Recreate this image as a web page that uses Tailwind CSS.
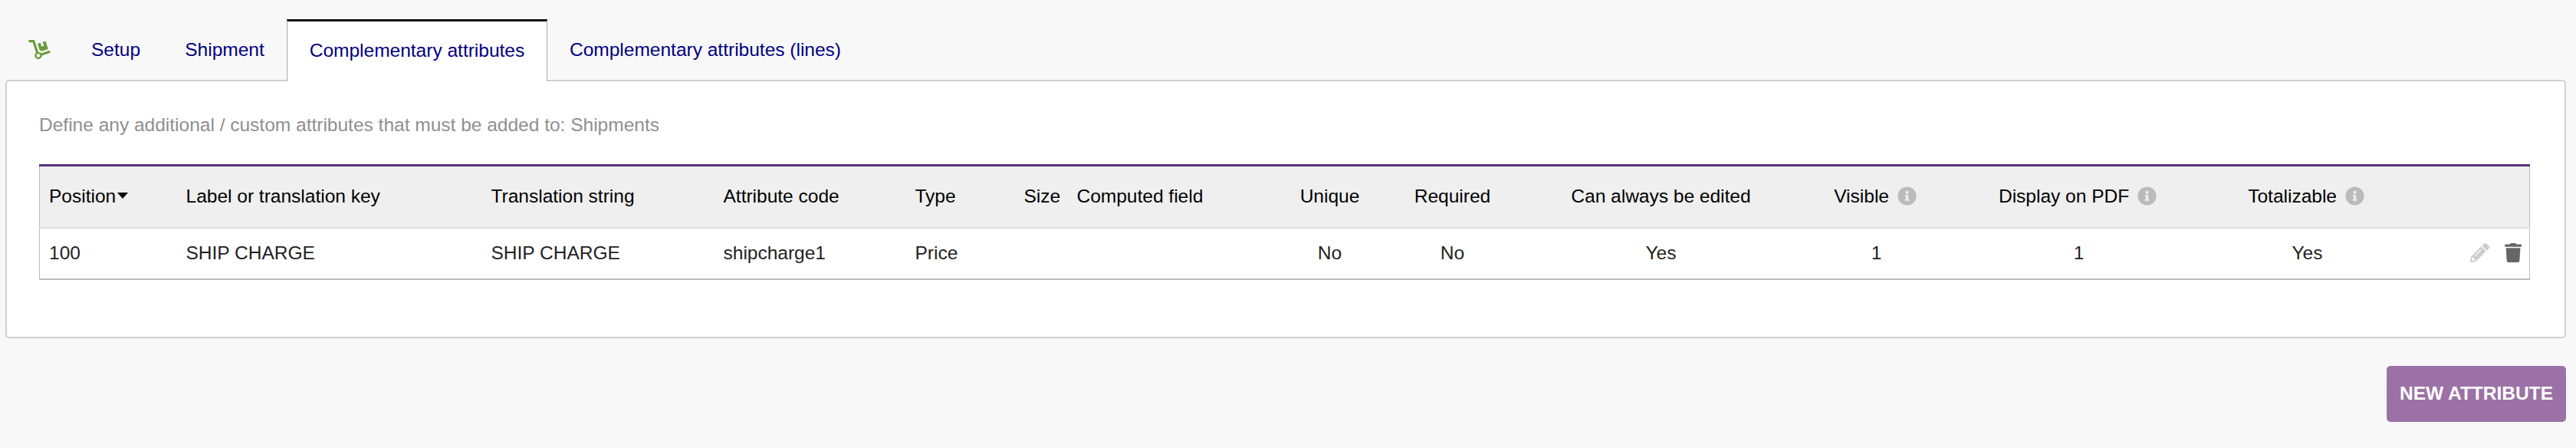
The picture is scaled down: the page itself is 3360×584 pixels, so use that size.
<!DOCTYPE html>
<html lang="en">
<head>
  <meta charset="UTF-8" />
  <title>Complementary attributes</title>
  <script src="https://cdn.jsdelivr.net/npm/@tailwindcss/browser@4"></script>
</head>
<body class="bg-[#f8f8f8] font-['Liberation_Sans',Arial,sans-serif] text-[24.5px] text-[#222] h-[584px] overflow-hidden">
  <div class="pl-[7px] pr-[13px] pt-[24px]">
    <!-- tabs -->
    <div class="flex h-[80px] text-[#000080]">
      <a class="w-[83px] flex items-center justify-center pl-[6px] pt-[1px]">
        <svg class="w-[29px] h-[25px] text-[#6a9b3a]" viewBox="0 0 576 512" fill="currentColor"><path d="M294.2 277.7c18 5 34.7 13.4 49.5 24.7l161.5-53.8c8.4-2.8 12.9-11.9 10.1-20.2L454.9 47.2c-2.8-8.4-11.9-12.9-20.2-10.1l-61.1 20.4 33.1 99.4L346 177l-33.1-99.4-61.6 20.5c-8.4 2.8-12.9 11.9-10.1 20.2l53 159.4zm281 48.7L565 296c-2.8-8.4-11.9-12.9-20.2-10.1l-213.5 71.2c-17.2-22-43.6-36.4-73.5-37L158.4 21.9C154 8.8 141.8 0 128 0H16C7.2 0 0 7.2 0 16v32c0 8.8 7.2 16 16 16h88.9l92.2 276.7c-26.1 20.4-41.7 53.6-36 90.5 6.1 39.4 37.9 72.3 77.3 79.2 60.2 10.7 112.3-34.8 113.4-92.6l213.3-71.2c8.3-2.8 12.9-11.8 10.1-20.2zM256 464c-26.5 0-48-21.5-48-48s21.5-48 48-48 48 21.5 48 48-21.5 48-48 48z"/></svg>
      </a>
      <a class="w-[122px] flex items-center justify-center pt-[2px]">Setup</a>
      <a class="w-[162px] flex items-center justify-center pt-[2px]">Shipment</a>
      <a class="w-[340px] flex items-center justify-center pb-[2px] bg-white border-t-[3px] border-x border-t-[#111] border-x-[#aaa] relative top-px h-[81px]">Complementary attributes</a>
      <a class="flex items-center pl-[29px] pt-[2px]">Complementary attributes (lines)</a>
    </div>

    <!-- card -->
    <div class="bg-white border-2 border-[#d0d0d0] rounded-[5px] h-[337px] pl-[42px] pr-[47px]">
      <p class="text-[#8f8f8f] pt-[43px] h-[108px] leading-[28px]">Define any additional / custom attributes that must be added to: Shipments</p>
      <table class="w-[3248px] table-fixed border-collapse border-x border-b-2 border-[#bbb] rounded-b">
        <colgroup>
          <col class="w-[179px]" /><col class="w-[398px]" /><col class="w-[303px]" /><col class="w-[250px]" /><col class="w-[142px]" /><col class="w-[69px]" /><col class="w-[243px]" /><col class="w-[198px]" /><col class="w-[122px]" /><col class="w-[422px]" /><col class="w-[140px]" /><col class="w-[388px]" /><col class="w-[208px]" /><col class="w-[186px]" />
        </colgroup>
        <thead>
          <tr class="h-[81px] bg-[#efefef] border-t-[3px] border-t-[#5a3278] border-b-2 border-b-[#dedede] text-black font-normal">
            <th class="font-normal text-left pl-[12px] whitespace-nowrap">Position<svg class="inline w-[14px] h-[8px] ml-[2px] align-[5px]" viewBox="0 0 14 8" fill="currentColor"><polygon points="0,0 14,0 7,8" /></svg></th>
            <th class="font-normal text-left pl-[12px]">Label or translation key</th>
            <th class="font-normal text-left pl-[12px]">Translation string</th>
            <th class="font-normal text-left pl-[12px]">Attribute code</th>
            <th class="font-normal text-left pl-[12px]">Type</th>
            <th class="font-normal text-left pl-[12px]">Size</th>
            <th class="font-normal text-left pl-[12px]">Computed field</th>
            <th class="font-normal text-center">Unique</th>
            <th class="font-normal text-center">Required</th>
            <th class="font-normal text-center">Can always be edited</th>
            <th class="font-normal text-center whitespace-nowrap pr-[3px]">Visible <svg class="inline w-[25px] h-[25px] text-[#bbb] align-[-4px] ml-[4px]" viewBox="0 0 512 512" fill="currentColor"><path d="M256 8C119 8 8 119 8 256s111 248 248 248 248-111 248-248S393 8 256 8zm0 110c23.196 0 42 18.804 42 42s-18.804 42-42 42-42-18.804-42-42 18.804-42 42-42zm56 254c0 6.627-5.373 12-12 12h-88c-6.627 0-12-5.373-12-12v-24c0-6.627 5.373-12 12-12h12v-64h-12c-6.627 0-12-5.373-12-12v-24c0-6.627 5.373-12 12-12h64c6.627 0 12 5.373 12 12v100h12c6.627 0 12 5.373 12 12v24z"/></svg></th>
            <th class="font-normal text-center whitespace-nowrap pr-[3px]">Display on PDF <svg class="inline w-[25px] h-[25px] text-[#bbb] align-[-4px] ml-[4px]" viewBox="0 0 512 512" fill="currentColor"><path d="M256 8C119 8 8 119 8 256s111 248 248 248 248-111 248-248S393 8 256 8zm0 110c23.196 0 42 18.804 42 42s-18.804 42-42 42-42-18.804-42-42 18.804-42 42-42zm56 254c0 6.627-5.373 12-12 12h-88c-6.627 0-12-5.373-12-12v-24c0-6.627 5.373-12 12-12h12v-64h-12c-6.627 0-12-5.373-12-12v-24c0-6.627 5.373-12 12-12h64c6.627 0 12 5.373 12 12v100h12c6.627 0 12 5.373 12 12v24z"/></svg></th>
            <th class="font-normal text-center whitespace-nowrap pr-[3px]">Totalizable <svg class="inline w-[25px] h-[25px] text-[#bbb] align-[-4px] ml-[4px]" viewBox="0 0 512 512" fill="currentColor"><path d="M256 8C119 8 8 119 8 256s111 248 248 248 248-111 248-248S393 8 256 8zm0 110c23.196 0 42 18.804 42 42s-18.804 42-42 42-42-18.804-42-42 18.804-42 42-42zm56 254c0 6.627-5.373 12-12 12h-88c-6.627 0-12-5.373-12-12v-24c0-6.627 5.373-12 12-12h12v-64h-12c-6.627 0-12-5.373-12-12v-24c0-6.627 5.373-12 12-12h64c6.627 0 12 5.373 12 12v100h12c6.627 0 12 5.373 12 12v24z"/></svg></th>
            <th></th>
          </tr>
        </thead>
        <tbody>
          <tr class="h-[67px]">
            <td class="pl-[12px]">100</td>
            <td class="pl-[12px]">SHIP CHARGE</td>
            <td class="pl-[12px]">SHIP CHARGE</td>
            <td class="pl-[12px]">shipcharge1</td>
            <td class="pl-[12px]">Price</td>
            <td></td>
            <td></td>
            <td class="text-center">No</td>
            <td class="text-center">No</td>
            <td class="text-center">Yes</td>
            <td class="text-center">1</td>
            <td class="text-center">1</td>
            <td class="text-center">Yes</td>
            <td class="pr-[10px]">
              <div class="flex justify-end items-center gap-[20px] pb-[2px]">
                <svg class="w-[25px] h-[25px] text-[#ccc]" viewBox="0 0 512 512" fill="currentColor"><path d="M497.9 142.1l-46.1 46.1c-4.7 4.7-12.3 4.7-17 0l-111-111c-4.7-4.7-4.7-12.3 0-17l46.1-46.1c18.7-18.7 49.1-18.7 67.9 0l60.1 60.1c18.8 18.7 18.8 49.1 0 67.9zM284.2 99.8L21.6 362.4.4 483.9c-2.9 16.4 11.4 30.6 27.8 27.8l121.5-21.3 262.6-262.6c4.7-4.7 4.7-12.3 0-17l-111-111c-4.8-4.7-12.4-4.7-17.1 0zM124.1 339.9c-5.5-5.5-5.5-14.3 0-19.8l154-154c5.5-5.5 14.3-5.5 19.8 0s5.5 14.3 0 19.8l-154 154c-5.5 5.5-14.3 5.5-19.8 0zM88 424h48v36.3l-64.5 11.3-31.1-31.1L51.7 376H88v48z"/></svg>
                <svg class="w-[22px] h-[25px] text-[#666]" viewBox="0 0 448 512" fill="currentColor"><path d="M432 32H312l-9.4-18.7A24 24 0 0 0 281.1 0H166.8a23.72 23.72 0 0 0-21.4 13.3L136 32H16A16 16 0 0 0 0 48v32a16 16 0 0 0 16 16h416a16 16 0 0 0 16-16V48a16 16 0 0 0-16-16zM53.2 467a48 48 0 0 0 47.9 45h245.8a48 48 0 0 0 47.9-45L416 128H32z"/></svg>
              </div>
            </td>
          </tr>
        </tbody>
      </table>
    </div>

    <div class="flex justify-end mt-[36px]">
      <button class="w-[234px] h-[73px] bg-[#9c72a6] text-white font-bold rounded-[5px]">NEW ATTRIBUTE</button>
    </div>
  </div>
</body>
</html>
